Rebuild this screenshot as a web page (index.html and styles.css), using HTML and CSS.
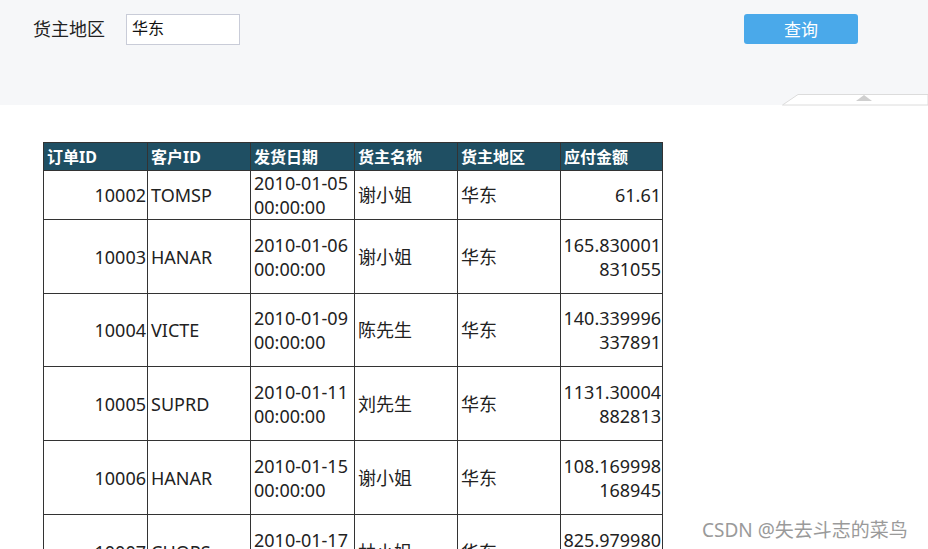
FILE: index.html
```html
<!DOCTYPE html>
<html lang="zh">
<head>
<meta charset="utf-8">
<link rel="stylesheet" href="styles.css">
</head>
<body>
<div class="panel">
  <div class="form">
    <label class="lbl">货主地区</label>
    <div class="input">华东</div>
    <button class="btn">查询</button>
  </div>
  <svg class="tab" width="146" height="12" viewBox="0 0 146 12">
    <polygon points="0.5,11 16,0.5 146,0.5 146,11" fill="#ffffff" stroke="#dcdcdc" stroke-width="1"/>
    <polygon points="74,7 82,1 90,7" fill="#cfcfcf"/>
  </svg>
</div>
<div class="content">
  <table class="grid">
    <colgroup>
      <col class="c1"><col class="c2"><col class="c3"><col class="c4"><col class="c5"><col class="c6">
    </colgroup>
    <thead>
      <tr><th>订单ID</th><th>客户ID</th><th>发货日期</th><th>货主名称</th><th>货主地区</th><th>应付金额</th></tr>
    </thead>
    <tbody>
      <tr class="r1"><td class="num">10002</td><td>TOMSP</td><td>2010-01-05 00:00:00</td><td>谢小姐</td><td>华东</td><td class="num">61.61</td></tr>
      <tr class="r2"><td class="num">10003</td><td>HANAR</td><td>2010-01-06 00:00:00</td><td>谢小姐</td><td>华东</td><td class="num">165.830001831055</td></tr>
      <tr class="r3"><td class="num">10004</td><td>VICTE</td><td>2010-01-09 00:00:00</td><td>陈先生</td><td>华东</td><td class="num">140.339996337891</td></tr>
      <tr class="r2"><td class="num">10005</td><td>SUPRD</td><td>2010-01-11 00:00:00</td><td>刘先生</td><td>华东</td><td class="num">1131.30004882813</td></tr>
      <tr class="r2"><td class="num">10006</td><td>HANAR</td><td>2010-01-15 00:00:00</td><td>谢小姐</td><td>华东</td><td class="num">108.169998168945</td></tr>
      <tr class="r2"><td class="num">10007</td><td>CHOPS</td><td>2010-01-17 00:00:00</td><td>林小姐</td><td>华东</td><td class="num">825.979980468750</td></tr>
    </tbody>
  </table>
</div>
<div class="watermark">CSDN @失去斗志的菜鸟</div>
</body>
</html>
```
FILE: styles.css
```css
html, body {
  margin: 0;
  padding: 0;
  background: #ffffff;
  font-family: "Noto Sans", "Noto Sans CJK SC", sans-serif;
  color: #222;
}
.panel {
  position: relative;
  height: 105px;
  background: #f6f7f9;
}
.form {
  display: flex;
  align-items: flex-start;
  padding: 14px 0 0 33px;
}
.lbl {
  width: 93px;
  height: 31px;
  line-height: 31px;
  font-size: 18px;
  color: #222;
}
.input {
  box-sizing: border-box;
  width: 114px;
  height: 31px;
  border: 1px solid #c9ccd8;
  background: #fff;
  padding-left: 5px;
  font-size: 16px;
  line-height: 27px;
  color: #111;
}
.btn {
  margin-left: 504px;
  width: 114px;
  height: 30px;
  border: none;
  border-radius: 3px;
  background: #4aa9ea;
  color: #fff;
  font-family: "Noto Sans CJK SC", sans-serif;
  font-size: 17px;
  line-height: 30px;
  padding: 0;
}
.tab {
  position: absolute;
  left: 782px;
  top: 94px;
}
.content {
  padding: 37px 0 0 43px;
}
.grid {
  border-collapse: collapse;
  table-layout: fixed;
  width: 619px;
}
.c1 { width: 104px; }
.c2 { width: 103px; }
.c3 { width: 104px; }
.c4 { width: 103px; }
.c5 { width: 103px; }
.c6 { width: 102px; }
.grid th {
  background: #1f4f63;
  color: #fff;
  font-size: 16px;
  font-weight: bold;
  text-align: left;
  height: 27px;
  padding: 0 0 0 3px;
  border: 1px solid #333;
  line-height: 20px;
}
.grid td {
  border: 1px solid #333;
  font-size: 18px;
  line-height: 24px;
  padding: 0 0 0 3px;
  vertical-align: middle;
  color: #222;
  word-break: break-all;
}
.grid td.num {
  text-align: right;
  padding: 0 1px 0 0;
}
.r1 td { height: 48px; }
.r2 td { height: 73px; }
.r3 td { height: 72px; }
.watermark {
  position: absolute;
  left: 702px;
  top: 515px;
  font-size: 19px;
  color: #9a9a9a;
  font-family: "Noto Sans", "Noto Sans CJK SC", sans-serif;
}
```
